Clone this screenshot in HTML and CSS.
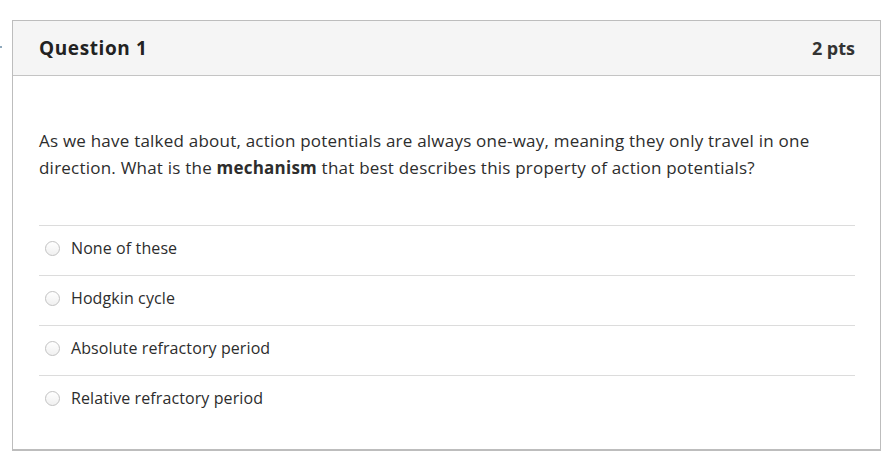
FILE: index.html
```html
<!DOCTYPE html>
<html lang="en">
<head>
  <meta charset="UTF-8" />
  <title>Question 1</title>
  <link rel="stylesheet" href="styles.css">
</head>
<body>
  <span class="edge-mark"></span>
  <div class="question">
    <div class="question-header">
      <h2>Question 1</h2>
      <span class="points">2 pts</span>
    </div>
    <div class="question-body">
      <p class="question-text">
        As we have talked about, action potentials are always one-way, meaning they only travel in one
        direction. What is the <strong>mechanism</strong> that best describes this property of action potentials?
      </p>
      <div class="answers">
        <label class="answer"><span class="radio"></span>None of these</label>
        <label class="answer"><span class="radio"></span>Hodgkin cycle</label>
        <label class="answer"><span class="radio"></span>Absolute refractory period</label>
        <label class="answer"><span class="radio"></span>Relative refractory period</label>
      </div>
    </div>
  </div>
</body>
</html>
```

FILE: styles.css
```css
body {
  margin: 0;
  padding: 20px 6px 0 12px;
  font-family: 'Open Sans', sans-serif;
  color: #2d2d2d;
  background: white;
}

.edge-mark {
  position: absolute;
  left: 0;
  top: 46px;
  width: 2px;
  height: 2px;
  background: #8fa9bd;
}

.question {
  border: 1px solid #bdbdbd;
  border-bottom-width: 2px;
}

.question-header {
  display: flex;
  justify-content: space-between;
  align-items: center;
  height: 54px;
  padding: 0 25px 0 26px;
  background: #f5f5f5;
  border-bottom: 1px solid #c4c4c4;
}

.question-header h2 {
  margin: 0;
  font-size: 19px;
  font-weight: 700;
  letter-spacing: 0.6px;
  color: #222;
}

.points {
  font-size: 18px;
  font-weight: 700;
  color: #333;
}

.question-body {
  padding: 51px 25px 24px 26px;
}

.question-text {
  margin: 0 0 44px;
  font-size: 17px;
  line-height: 27px;
  letter-spacing: 0.22px;
}

.answer {
  display: flex;
  align-items: center;
  height: 50px;
  padding-bottom: 5px;
  box-sizing: border-box;
  border-top: 1px solid #dcdcdc;
  font-size: 16px;
  letter-spacing: 0.1px;
}

.radio {
  width: 13px;
  height: 13px;
  margin: 0 11px 0 6px;
  border: 1px solid #c2c2c2;
  border-radius: 50%;
  background: linear-gradient(#fff, #f0f0f0);
}
```
